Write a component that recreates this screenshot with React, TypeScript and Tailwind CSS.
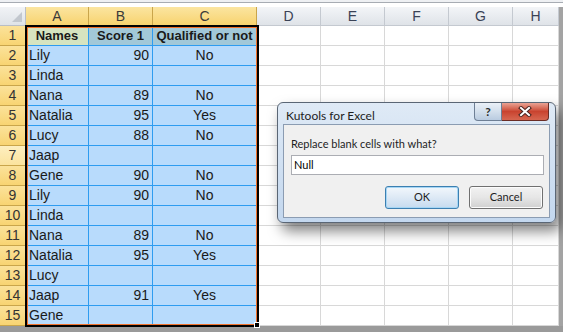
import React from 'react';

const cols = [
  { key: 'A', w: 'w-[63px]', sel: true },
  { key: 'B', w: 'w-[64px]', sel: true },
  { key: 'C', w: 'w-[104px]', sel: true },
  { key: 'D', w: 'w-[64px]', sel: false },
  { key: 'E', w: 'w-[64px]', sel: false },
  { key: 'F', w: 'w-[64px]', sel: false },
  { key: 'G', w: 'w-[64px]', sel: false },
  { key: 'H', w: 'w-[46px]', sel: false },
];

const rows: [string, string, string][] = [
  ['Lily', '90', 'No'],
  ['Linda', '', ''],
  ['Nana', '89', 'No'],
  ['Natalia', '95', 'Yes'],
  ['Lucy', '88', 'No'],
  ['Jaap', '', ''],
  ['Gene', '90', 'No'],
  ['Lily', '90', 'No'],
  ['Linda', '', ''],
  ['Nana', '89', 'No'],
  ['Natalia', '95', 'Yes'],
  ['Lucy', '', ''],
  ['Jaap', '91', 'Yes'],
  ['Gene', '', ''],
];

function ColumnHeaders() {
  return (
    <div className="flex h-[19px]">
      {/* corner */}
      <div className="relative w-[26px] h-full bg-gradient-to-b from-[#f1f3f6] to-[#dfe3e8] border-r border-b border-[#b9bec6]">
        <div className="absolute right-[3px] bottom-[3px] w-0 h-0 border-l-[10px] border-l-transparent border-b-[10px] border-b-[#c2c7ce]" />
      </div>
      {cols.map((c) => (
        <div
          key={c.key}
          className={
            c.sel
              ? `${c.w} h-full flex items-center justify-center border-r border-b border-[#c9a54b] bg-gradient-to-b from-[#fbe5a0] to-[#f8d36e] text-[#3a3a3a]`
              : `${c.w} h-full flex items-center justify-center border-r border-b border-[#c4c9d0] bg-gradient-to-b from-[#f3f5f8] to-[#dfe3e8] text-[#3a4256]`
          }
        >
          {c.key}
        </div>
      ))}
      <div className="flex-1 bg-[#a3a3a3]" />
    </div>
  );
}

function Sheet() {
  const selCell = 'h-full border-r border-b border-[#2e9cf0] flex items-center px-[3px]';
  const emptyCell = 'h-full border-r border-b border-[#d8d8d8] bg-white';
  return (
    <div className="relative">
      <ColumnHeaders />
      {/* row 1 */}
      <div className="flex h-[20px]">
        <div className="w-[26px] h-full flex items-center justify-center border-r border-b border-[#c9a54b] bg-gradient-to-b from-[#fbe29a] to-[#f8d472] text-[#333]">
          1
        </div>
        <div className={`w-[63px] ${selCell} justify-center font-bold text-[13px] bg-[#d6e4c0]`}>Names</div>
        <div className={`w-[64px] ${selCell} justify-center font-bold text-[13px] bg-[#a2c8d8]`}>Score 1</div>
        <div className="w-[104px] h-full border-r border-b border-[#2e9cf0] flex items-center justify-center font-bold text-[13px] bg-[#a2c8d8] whitespace-nowrap">
          Qualified or not
        </div>
        {cols.slice(3).map((c) => (
          <div key={c.key} className={`${c.w} ${emptyCell}`} />
        ))}
        <div className="flex-1 bg-[#a3a3a3]" />
      </div>
      {rows.map((r, i) => (
        <div key={i} className="flex h-[20px]">
          <div
            className={
              i === 5
                ? 'w-[26px] h-full flex items-center justify-center border-r border-b border-[#c9a54b] bg-gradient-to-b from-[#fdefc0] to-[#fbe39d] text-[#333]'
                : 'w-[26px] h-full flex items-center justify-center border-r border-b border-[#c9a54b] bg-gradient-to-b from-[#fbe29a] to-[#f8d472] text-[#333]'
            }
          >
            {i + 2}
          </div>
          <div className={`w-[63px] ${selCell} bg-[#b8dbfc]`}>{r[0]}</div>
          <div className={`w-[64px] ${selCell} bg-[#b8dbfc] justify-end`}>{r[1]}</div>
          <div className={`w-[104px] ${selCell} bg-[#b8dbfc] justify-center`}>{r[2]}</div>
          {cols.slice(3).map((c) => (
            <div key={c.key} className={`${c.w} ${emptyCell}`} />
          ))}
          <div className="flex-1 bg-[#a3a3a3]" />
        </div>
      ))}
      {/* selection outline */}
      <div className="absolute left-[25px] top-[18px] w-[234px] h-[302px] border-2 border-black shadow-[inset_0_0_0_1px_#f0702a] pointer-events-none" />
      <div className="absolute left-[254px] top-[315px] w-[6px] h-[6px] bg-black border border-white pointer-events-none" />
    </div>
  );
}

function Dialog() {
  return (
    <div
      className="absolute left-[277px] top-[102px] w-[279px] h-[121px] rounded-[6px] border border-[#5a6675] bg-gradient-to-b from-[#dfeaf6] to-[#c3d7ee] shadow-[5px_8px_14px_rgba(0,0,0,0.5)] flex flex-col px-[5px] pb-[4px]"
      style={{ fontFamily: 'Lato, "Open Sans", sans-serif' }}
    >
      <div className="relative h-[20px] flex items-center pl-[3px] text-[12px] text-[#1e1e1e]">
        <span className="mt-[6px]">Kutools for Excel</span>
        <div className="absolute right-[1px] top-0 flex">
          <div className="w-[28px] h-[18px] border border-[#6e7f95] border-t-0 rounded-bl-[4px] bg-gradient-to-b from-[#eaf0f7] via-[#d3dfec] to-[#b9cbe0] flex items-center justify-center text-[12px] font-bold text-[#2a2a2a]">
            ?
          </div>
          <div className="w-[47px] h-[18px] border border-[#6a2c24] border-t-0 border-l-0 rounded-br-[4px] bg-gradient-to-b from-[#e9a294] via-[#c9432f] to-[#d66650] flex items-center justify-center">
            <svg width="14" height="11" viewBox="0 0 14 11">
              <path d="M3 2 L11 9 M11 2 L3 9" stroke="#4a2420" strokeWidth="4" strokeLinecap="square" />
              <path d="M3 2 L11 9 M11 2 L3 9" stroke="#ffffff" strokeWidth="2" strokeLinecap="square" />
            </svg>
          </div>
        </div>
      </div>
      <div className="flex-1 mt-[1px] border border-[#8b9cb2] bg-[#f0f0f0] flex flex-col pl-[7px] pr-[5px] pt-[11px] text-[11px] text-[#1e1e1e]">
        <div className="leading-[16px]">Replace blank cells with what?</div>
        <div className="mt-[3px] h-[20px] border border-[#abadb3] bg-white flex items-center pl-[2px] text-black">
          Null
        </div>
        <div className="mt-[11px] flex justify-end gap-[10px] pr-[1px]">
          <div className="w-[74px] h-[23px] rounded-[3px] border border-[#3c7fb1] bg-gradient-to-b from-[#f2f7fc] via-[#dde9f5] to-[#c6dbef] shadow-[inset_0_0_0_1px_#a6d6f4] flex items-center justify-center">
            OK
          </div>
          <div className="w-[74px] h-[23px] rounded-[3px] border border-[#707070] bg-gradient-to-b from-[#f2f2f2] via-[#e6e6e6] to-[#d0d0d0] shadow-[inset_0_0_0_1px_#fcfcfc] flex items-center justify-center">
            Cancel
          </div>
        </div>
      </div>
    </div>
  );
}

export default function App() {
  return (
    <div
      className="relative w-[563px] h-[332px] overflow-hidden bg-white text-[14px] text-[#1a1a1a]"
      style={{ fontFamily: '"Liberation Sans", Arial, sans-serif' }}
    >
      {/* formula bar remnant */}
      <div className="h-[7px] flex flex-col">
        <div className="h-[2px] bg-[#eef0f3]" />
        <div className="h-[1px] bg-[#a7acb3]" />
        <div className="flex-1 bg-white" />
      </div>
      <Sheet />
      <div className="h-[6px] bg-[#9a9a9a]" />
      <Dialog />
    </div>
  );
}
